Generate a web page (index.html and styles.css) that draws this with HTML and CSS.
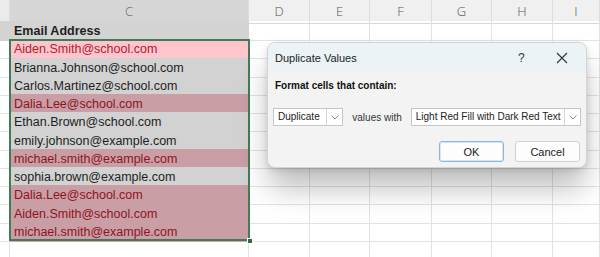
FILE: index.html
```html
<!DOCTYPE html>
<html>
<head>
<meta charset="utf-8">
<link rel="stylesheet" href="styles.css">
</head>
<body>
<div class="sheet">
  <div class="row head">
    <div class="c s"></div><div class="c col-c">C</div><div class="c">D</div><div class="c">E</div><div class="c">F</div><div class="c">G</div><div class="c">H</div><div class="c">I</div>
  </div>
  <div class="row title-row">
    <div class="c s gray"></div><div class="c col-c gray bold">Email Address</div><div class="c"></div><div class="c"></div><div class="c"></div><div class="c"></div><div class="c"></div><div class="c"></div>
  </div>
  <div class="row"><div class="c s"></div><div class="c col-c active dup">Aiden.Smith@school.com</div><div class="c"></div><div class="c"></div><div class="c"></div><div class="c"></div><div class="c"></div><div class="c"></div></div>
  <div class="row"><div class="c s"></div><div class="c col-c sel">Brianna.Johnson@school.com</div><div class="c"></div><div class="c"></div><div class="c"></div><div class="c"></div><div class="c"></div><div class="c"></div></div>
  <div class="row"><div class="c s"></div><div class="c col-c sel">Carlos.Martinez@school.com</div><div class="c"></div><div class="c"></div><div class="c"></div><div class="c"></div><div class="c"></div><div class="c"></div></div>
  <div class="row"><div class="c s"></div><div class="c col-c sel dup">Dalia.Lee@school.com</div><div class="c"></div><div class="c"></div><div class="c"></div><div class="c"></div><div class="c"></div><div class="c"></div></div>
  <div class="row"><div class="c s"></div><div class="c col-c sel">Ethan.Brown@school.com</div><div class="c"></div><div class="c"></div><div class="c"></div><div class="c"></div><div class="c"></div><div class="c"></div></div>
  <div class="row"><div class="c s"></div><div class="c col-c sel">emily.johnson@example.com</div><div class="c"></div><div class="c"></div><div class="c"></div><div class="c"></div><div class="c"></div><div class="c"></div></div>
  <div class="row"><div class="c s"></div><div class="c col-c sel dup">michael.smith@example.com</div><div class="c"></div><div class="c"></div><div class="c"></div><div class="c"></div><div class="c"></div><div class="c"></div></div>
  <div class="row"><div class="c s"></div><div class="c col-c sel">sophia.brown@example.com</div><div class="c"></div><div class="c"></div><div class="c"></div><div class="c"></div><div class="c"></div><div class="c"></div></div>
  <div class="row"><div class="c s"></div><div class="c col-c sel dup">Dalia.Lee@school.com</div><div class="c"></div><div class="c"></div><div class="c"></div><div class="c"></div><div class="c"></div><div class="c"></div></div>
  <div class="row"><div class="c s"></div><div class="c col-c sel dup">Aiden.Smith@school.com</div><div class="c"></div><div class="c"></div><div class="c"></div><div class="c"></div><div class="c"></div><div class="c"></div></div>
  <div class="row"><div class="c s"></div><div class="c col-c sel dup">michael.smith@example.com</div><div class="c"></div><div class="c"></div><div class="c"></div><div class="c"></div><div class="c"></div><div class="c"></div></div>
  <div class="row"><div class="c s"></div><div class="c col-c"></div><div class="c"></div><div class="c"></div><div class="c"></div><div class="c"></div><div class="c"></div><div class="c"></div></div>

  <div class="selection"><span class="handle"></span></div>

  <div class="dialog">
    <div class="dlg-title">
      <span class="dlg-name">Duplicate Values</span>
      <span class="dlg-help">?</span>
      <svg class="dlg-close" width="12" height="12" viewBox="0 0 12 12"><path d="M1 1 L11 11 M11 1 L1 11" stroke="#333" stroke-width="1.1" fill="none"/></svg>
    </div>
    <div class="dlg-body">
      <div class="dlg-label">Format cells that contain:</div>
      <div class="dlg-controls">
        <div class="combo combo-a"><span class="combo-text">Duplicate</span><span class="combo-btn"><svg width="8" height="5" viewBox="0 0 8 5"><path d="M0.5 0.5 L4 4 L7.5 0.5" stroke="#888" fill="none"/></svg></span></div>
        <span class="dlg-mid">values with</span>
        <div class="combo combo-b"><span class="combo-text">Light Red Fill with Dark Red Text</span><span class="combo-btn"><svg width="8" height="5" viewBox="0 0 8 5"><path d="M0.5 0.5 L4 4 L7.5 0.5" stroke="#888" fill="none"/></svg></span></div>
      </div>
      <div class="dlg-buttons">
        <button class="btn btn-ok">OK</button>
        <button class="btn">Cancel</button>
      </div>
    </div>
  </div>
</div>
</body>
</html>
```

FILE: styles.css
```css
* { box-sizing: border-box; }
html, body { margin: 0; padding: 0; background: #fff; }
body { width: 600px; height: 257px; overflow: hidden; }

.sheet {
  position: relative;
  width: 600px;
  height: 257px;
  overflow: hidden;
  font-family: "Liberation Sans", Arial, sans-serif;
}

.row {
  display: grid;
  grid-template-columns: 10px 239px 61px 60px 62px 60px 61px 47px;
  height: 18.25px;
}
.row .c {
  border-right: 1px solid #e2e2e2;
  border-bottom: 1px solid #e2e2e2;
  font-size: 12.5px;
  line-height: 18px;
  padding-top: 1px;
  padding-left: 4px;
  white-space: nowrap;
  color: #1e1e1e;
}
.row .c.s { padding: 0; }

.head { height: 21px; background: #f0f0f0; }
.head .c {
  text-align: center;
  padding: 0;
  font-family: "Open Sans", sans-serif;
  font-size: 13px;
  font-weight: 300;
  line-height: 22px;
  color: #555;
  border-right: 1px solid #dcdcdc;
  border-bottom: 1px solid #d8d8d8;
}
.head .c.s { background: #ebebeb; }
.head .col-c {
  background: #d6d6d6;
  border-bottom: 2px solid #3f7c57;
  color: #666;
}

.title-row .gray { background: #d3d3d3; border-right-color: #d3d3d3; border-bottom-color: #d0d0d0; }
.bold { font-weight: bold; color: #111; }

.sel { background: #d2d2d2; border-bottom-color: #dadada !important; border-right-color: #d2d2d2 !important; }
.sel.dup { background: #c99ea5; border-bottom-color: #cfa6ac !important; border-right-color: #c99ea5 !important; color: #8e1424; }
.active.dup { background: #fdc6cd; color: #b0202f; border-bottom-color: #f0c0c6; border-right-color: #fdc6cd; }

.selection {
  position: absolute;
  left: 9px;
  top: 38.75px;
  width: 241px;
  height: 202px;
  border: 2px solid #3f7c57;
  pointer-events: none;
}
.handle {
  position: absolute;
  right: -5px;
  bottom: -5px;
  width: 6px;
  height: 6px;
  background: #2f6a47;
  border: 1px solid #fff;
}

.dialog {
  position: absolute;
  left: 267px;
  top: 42px;
  width: 320px;
  height: 126px;
  border: 1px solid #d4d4d4;
  border-radius: 8px;
  background: #f3f3f3;
  box-shadow: 0 22px 30px -2px rgba(0,0,0,0.26), 0 2px 6px rgba(0,0,0,0.12);
  font-family: "Liberation Sans", Arial, sans-serif;
  color: #1a1a1a;
  overflow: hidden;
}
.dlg-title {
  display: flex;
  align-items: center;
  height: 29px;
  background: #ebf3f6;
  padding-left: 7px;
  padding-right: 18px;
}
.dlg-name { font-size: 11px; flex: 1; color: #222; }
.dlg-help { font-size: 12px; width: 12px; margin-right: 26px; color: #333; }
.dlg-close { display: block; }

.dlg-body { padding: 3px 5px 0 5px; }
.dlg-label { font-size: 10px; font-weight: bold; padding-left: 2px; height: 22px; line-height: 22px; color: #111; }
.dlg-controls { display: flex; align-items: center; margin-top: 11px; height: 18px; }
.combo {
  display: flex;
  height: 18px;
  background: #fff;
  border: 1px solid #c6c6c6;
  font-size: 10px;
  line-height: 16px;
}
.combo-a { width: 71px; }
.combo-b { width: 172px; margin-left: 9px; }
.combo-text { flex: 1; padding-left: 4px; white-space: nowrap; overflow: hidden; color: #222; }
.combo-btn {
  width: 16px;
  border-left: 1px solid #d6d6d6;
  display: flex;
  align-items: center;
  justify-content: center;
}
.dlg-mid { font-size: 10px; margin-left: 9px; color: #333; white-space: nowrap; }

.dlg-buttons {
  display: flex;
  justify-content: flex-end;
  gap: 11px;
  margin-top: 15px;
  padding-right: 1px;
}
.btn {
  width: 65px;
  height: 21px;
  background: #fdfdfd;
  border: 1px solid #d0d0d0;
  border-radius: 3px;
  font-family: "Liberation Sans", Arial, sans-serif;
  font-size: 11px;
  color: #222;
  padding: 0;
}
.btn-ok { border-color: #8cb6d4; box-shadow: inset 0 0 0 1px #d6e8f4; }
```
